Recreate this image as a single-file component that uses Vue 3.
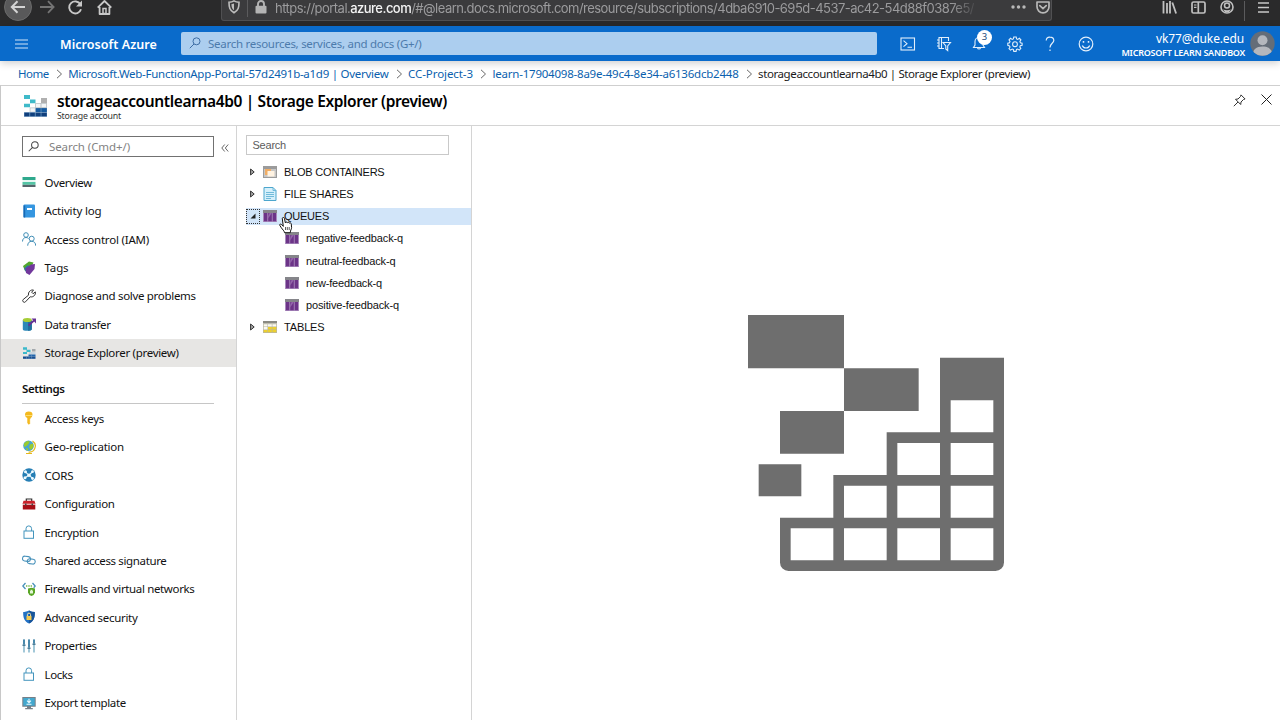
<script setup>
// Spreads a label's letters so that it fills the given width in pixels.
const vFit = {
  mounted(el, binding) {
    const range = document.createRange()
    range.selectNodeContents(el)
    const natural = range.getBoundingClientRect().width
    const count = el.textContent.trim().length
    el.style.letterSpacing = ((binding.value - natural) / count).toFixed(3) + 'px'
  },
}

const crumbs = [
  { text: 'Home', w: 30.7 },
  { text: 'Microsoft.Web-FunctionApp-Portal-57d2491b-a1d9 | Overview', w: 320.3 },
  { text: 'CC-Project-3', w: 65 },
  { text: 'learn-17904098-8a9e-49c4-8e34-a6136dcb2448', w: 246 },
]

const general = [
  { text: 'Overview', w: 47.5, icon: 'overview' },
  { text: 'Activity log', w: 57, icon: 'log' },
  { text: 'Access control (IAM)', w: 104.5, icon: 'people' },
  { text: 'Tags', w: 24, icon: 'tags' },
  { text: 'Diagnose and solve problems', w: 151.2, icon: 'wrench' },
  { text: 'Data transfer', w: 66, icon: 'transfer' },
  { text: 'Storage Explorer (preview)', w: 134.2, icon: 'explorer', active: true },
]

const settings = [
  { text: 'Access keys', w: 59.5, icon: 'key' },
  { text: 'Geo-replication', w: 79.5, icon: 'globe' },
  { text: 'CORS', w: 29, icon: 'cors' },
  { text: 'Configuration', w: 70, icon: 'toolbox' },
  { text: 'Encryption', w: 54.2, icon: 'lock' },
  { text: 'Shared access signature', w: 122, icon: 'link' },
  { text: 'Firewalls and virtual networks', w: 150, icon: 'firewall' },
  { text: 'Advanced security', w: 93, icon: 'shield' },
  { text: 'Properties', w: 52.2, icon: 'sliders' },
  { text: 'Locks', w: 28.2, icon: 'lock' },
  { text: 'Export template', w: 81.3, icon: 'monitor' },
]

const groups = [
  { items: general },
  { title: 'Settings', items: settings },
]

const tree = [
  { text: 'BLOB CONTAINERS', w: 100.5, icon: 'blob' },
  { text: 'FILE SHARES', w: 69.5, icon: 'file' },
  { text: 'QUEUES', w: 45, icon: 'queue', open: true },
  { text: 'negative-feedback-q', w: 97, icon: 'queue', child: true },
  { text: 'neutral-feedback-q', w: 89.5, icon: 'queue', child: true },
  { text: 'new-feedback-q', w: 76, icon: 'queue', child: true },
  { text: 'positive-feedback-q', w: 93, icon: 'queue', child: true },
  { text: 'TABLES', w: 40.5, icon: 'table' },
]
</script>

<template>
  <div class="page">
    <div class="browser">
      <div class="nav">
        <span class="back">
          <svg width="16" height="14" viewBox="0 0 16 14" fill="none" stroke="#d4d4d4" stroke-width="2"><path d="M15 7H2M7.5 1.2L1.8 7l5.7 5.8" /></svg>
        </span>
        <svg class="fwd" width="15" height="14" viewBox="0 0 15 14" fill="none" stroke="#747474" stroke-width="1.8"><path d="M0 7h13M8 1.2L13.6 7 8 12.8" /></svg>
        <svg class="reload" width="15" height="15" viewBox="0 0 15 15"><path d="M12.4 4.3A6 6 0 1 0 13 9.2" fill="none" stroke="#c8c8c8" stroke-width="1.9" /><path d="M14 .6v6H8z" fill="#c8c8c8" /></svg>
        <svg class="home" width="15" height="15" viewBox="0 0 15 15" fill="none" stroke="#c8c8c8" stroke-width="1.8"><path d="M.7 7.6L7.5 1l6.800 6.600M2.600 7v7h9.800V7" stroke-linejoin="round" /><path d="M6 13.500V8.600h3v4.900z" stroke-width="1.500" /></svg>
      </div>
      <div class="url">
        <svg class="shieldo" width="12" height="14" viewBox="0 0 12 14"><path d="M6 .9c1.7 1 3.3 1.3 5 1.4 0 5-.6 8-5 10.5C1.600 10.300 1 7.300 1 2.300 2.700 2.200 4.300 1.900 6 .9z" fill="none" stroke="#bdbdbd" stroke-width="1.6" /><path d="M6 3.500v6.800C4.200 9 3.500 7.500 3.400 4.300z" fill="#bdbdbd" /></svg>
        <i class="bar"></i>
        <svg class="padlock" width="12" height="14" viewBox="0 0 12 14"><path d="M3 6V4a3 3 0 0 1 6 0v2" fill="none" stroke="#b4b4b4" stroke-width="1.900" /><rect x=".5" y="5.800" width="11" height="7.700" rx="1" fill="#b4b4b4" /></svg>
        <div class="address"><span v-fit="699">https://portal.<b>azure.com</b>/#@learn.docs.microsoft.com/resource/subscriptions/4dba6910-695d-4537-ac42-54d88f0387e5/</span></div>
        <svg class="dots" width="15" height="4" viewBox="0 0 15 4" fill="#b8b8b8"><circle cx="2" cy="2" r="1.700" /><circle cx="7.500" cy="2" r="1.700" /><circle cx="13" cy="2" r="1.700" /></svg>
        <svg class="pocket" width="14" height="13" viewBox="0 0 14 13" fill="none" stroke="#b8b8b8" stroke-width="1.700"><path d="M1 1h12v4.800a6 6 0 0 1-12 0z" stroke-linejoin="round" /><path d="M3.800 4.600L7 7.600l3.200-3" stroke-linecap="round" /></svg>
      </div>
      <div class="tools">
        <svg width="15" height="13" viewBox="0 0 15 13" stroke="#c0c0c0" stroke-width="1.800"><path d="M1.500 0v12.500M5 2v10.500M8 0v12.500M10.300 1.500l3.800 11" /></svg>
        <svg width="15" height="13" viewBox="0 0 15 13" fill="none" stroke="#c0c0c0" stroke-width="1.700"><rect x="1" y="1" width="13" height="11" rx="1.500" /><path d="M7.300 1v11" /><path d="M3 4h2.500M3 6.300h2.500" stroke-width="1.200" /></svg>
        <svg width="14" height="14" viewBox="0 0 14 14"><circle cx="7" cy="7" r="6" fill="none" stroke="#c0c0c0" stroke-width="1.600" /><circle cx="7" cy="5.500" r="2.500" fill="none" stroke="#c0c0c0" stroke-width="1.500" /><path d="M3 9.500q4 1.500 8 0Q9.500 12.300 7 12.300T3 9.500z" fill="#c0c0c0" /></svg>
        <i class="bar"></i>
        <svg width="11" height="11" viewBox="0 0 11 11" stroke="#c8c8c8" stroke-width="1.700"><path d="M0 1h11M0 5.500h11M0 10h11" /></svg>
      </div>
    </div>

    <header class="azure">
      <svg class="burger" width="13" height="10" viewBox="0 0 13 10" stroke="#cfe3f7" stroke-width="1.100"><path d="M0 1h13M0 5h13M0 9h13" /></svg>
      <div class="brand"><span v-fit="97">Microsoft Azure</span></div>
      <div class="search">
        <svg width="12" height="12" viewBox="0 0 12 12" fill="none" stroke="#3c6ca3" stroke-width="1"><circle cx="7.500" cy="4.300" r="3.500" /><path d="M5 7L.8 11.200" /></svg>
        <span v-fit="213.500">Search resources, services, and docs (G+/)</span>
      </div>
      <div class="actions">
        <svg width="16" height="14" viewBox="0 0 16 14" fill="none" stroke="#e3effb" stroke-width="1.100"><rect x="1" y="1" width="13.500" height="12" /><path d="M3.500 3.700L7 6.700l-3.500 3M7.500 10.300H12" /></svg>
        <svg width="16" height="16" viewBox="0 0 16 16" fill="none" stroke="#e3effb" stroke-width="1.100"><path d="M12.500 5V1.500H3v11h5M5.500 1.500v11M1 4h2M1 7h2M1 10h2" /><path d="M7 6.500h7.500l-2.800 3.500v4.500L9.800 13v-3z" /></svg>
        <span class="bell">
          <svg width="14" height="15" viewBox="0 0 14 15" fill="none" stroke="#e3effb" stroke-width="1.100"><path d="M1.500 11.500h11L11 9V5.500a4 4 0 0 0-8 0V9zM5.500 12a1.600 1.600 0 0 0 3 0" /></svg>
          <em>3</em>
        </span>
        <svg width="16" height="16" viewBox="0 0 16 16" fill="none" stroke="#e3effb" stroke-width="1.100"><path d="M6.800 1h2.400l.4 1.900 1.100.5 1.700-1.100 1.500 1.600-1 1.700.5 1.100 1.700.4v2.200l-1.800.5-.5 1.100 1 1.600-1.500 1.600-1.700-1-1.100.4-.4 1.900H6.800l-.5-1.900-1.100-.4-1.700 1L2 12.600 3 11l-.5-1.100L.800 9.400V7.100l1.700-.4L3 5.600 2 3.900l1.500-1.600 1.700 1.100 1.100-.5z" /><circle cx="8" cy="8.200" r="2.400" /></svg>
        <svg width="10" height="16" viewBox="0 0 10 16" fill="none" stroke="#e3effb" stroke-width="1.200"><path d="M1.200 4.500A3.600 3.600 0 0 1 5 1.200c2.300 0 3.800 1.300 3.800 3.200C8.800 7.200 5 7.500 5 11.500M5 13.600v1.500" /></svg>
        <svg width="16" height="16" viewBox="0 0 16 16" fill="none" stroke="#e3effb" stroke-width="1.200"><circle cx="8" cy="8" r="6.800" /><path d="M4.300 9.500a4 4 0 0 0 7.400 0" /><path d="M5.500 5v1.700M10.500 5v1.700" stroke-width="1.500" /></svg>
      </div>
      <div class="account">
        <span class="mail" v-fit="88">vk77@duke.edu</span>
        <span class="tenant" v-fit="123.500">MICROSOFT LEARN SANDBOX</span>
      </div>
      <svg class="avatar" width="25" height="25" viewBox="0 0 25 25"><defs><clipPath id="face"><circle cx="12.500" cy="12.500" r="12.200" /></clipPath></defs><g clip-path="url(#face)"><rect width="25" height="25" fill="#646d78" /><circle cx="12.500" cy="9.300" r="5" fill="#b4b7bd" /><path d="M2.500 25c0-7 4-9.600 10-9.600s10 2.600 10 9.600z" fill="#b4b7bd" /></g></svg>
    </header>

    <nav class="crumbs">
      <template v-for="c in crumbs" :key="c.text">
        <a v-fit="c.w">{{ c.text }}</a>
        <svg width="19.500" height="10" viewBox="0 0 19.500 10" fill="none" stroke="#666" stroke-width="1"><path d="M8 .800L12.500 5 8 9.200" /></svg>
      </template>
      <span v-fit="272">storageaccountlearna4b0 | Storage Explorer (preview)</span>
    </nav>

    <section class="blade">
      <div class="head">
        <svg class="logo" width="23" height="22" viewBox="0 0 23 22">
          <path fill="#3fbac9" d="M0 0h6v4H0zM6 4.500h5.500v3.700H6zM0 8.700h6v3.600H0z" />
          <path fill="#b0b0b0" d="M17 3h6v5h-6z" />
          <path fill="#b9c0c5" d="M11.200 8h11.800v5H11.200zM5.700 12.600h5.500v4.600H5.700z" />
          <path fill="#f2f5f7" d="M12 8.800h4.500v3.500H12zM17.500 8.800h4.700v3.500h-4.700zM6.400 13.300h4.500v3.400H6.400z" />
          <path fill="#5a88b5" d="M11.500 13H23v4H11.500zM0 17.200h23v4.500H0z" />
          <path fill="#155aa0" d="M11.800 13.200h4.800v3.700h-4.800zM17.500 13.200h5.200v3.700h-5.200z" />
          <path fill="#103f7c" d="M.5 17.700h4.700v3.600H.5zM6.200 17.700h4.600v3.600H6.200zM11.800 17.700h4.800v3.600h-4.800zM17.500 17.700h5.200v3.600h-5.200z" />
        </svg>
        <div class="titles">
          <h1><span v-fit="390">storageaccountlearna4b0 | Storage Explorer (preview)</span></h1>
          <p><span v-fit="64">Storage account</span></p>
        </div>
        <svg class="pin" width="13" height="13" viewBox="0 0 13 13" fill="none" stroke="#333" stroke-width="1"><path d="M8 .900L12.100 5l-1.600.5L8 8l-.3 2.500L2.500 5.300 5 5l2.500-2.500zM5 8L.800 12.200" /></svg>
        <svg class="close" width="11" height="11" viewBox="0 0 11 11" stroke="#222" stroke-width="1"><path d="M.5.5l10 10M10.500.5l-10 10" /></svg>
      </div>

      <div class="body">
        <aside class="menu">
          <div class="filter">
            <div class="field">
              <svg width="11" height="11" viewBox="0 0 12 12" fill="none" stroke="#444" stroke-width="1.100"><circle cx="7.500" cy="4.300" r="3.600" /><path d="M5 7L.8 11.200" /></svg>
              <span v-fit="81">Search (Cmd+/)</span>
            </div>
            <svg class="collapse" width="8" height="8" viewBox="0 0 8 8" fill="none" stroke="#666" stroke-width="1"><path d="M3.700.500L.8 4l2.900 3.500M7.200.500L4.300 4l2.900 3.500" /></svg>
          </div>

          <div v-for="g in groups" :key="g.title || 'general'" class="group">
            <h2 v-if="g.title"><span v-fit="42.500">{{ g.title }}</span></h2>
            <div v-for="m in g.items" :key="m.text" class="item" :class="{ active: m.active }">
              <svg class="mi" width="14" height="14" viewBox="0 0 14 14">
                <g v-if="m.icon === 'overview'"><path fill="#2fa98d" d="M.500 2h13v3h-13z" /><path fill="#e8f7f3" d="M.500 5h13v2h-13z" /><path fill="#54c5a5" d="M.500 7h13v2.800h-13z" /><path fill="#56656a" d="M.500 9.800h13V12h-13z" /></g>
                <g v-else-if="m.icon === 'log'"><rect x="1.500" y=".500" width="11.500" height="13" rx="1" fill="#3596e0" /><path fill="#1869b4" d="M1.500 1.500h1.700v12H2q-.5 0-.5-.5z" /><path fill="#fff" d="M5 4h5v2H5z" /></g>
                <g v-else-if="m.icon === 'people'" fill="none" stroke="#3f8db5" stroke-width="1"><circle cx="4" cy="3" r="2.300" /><path d="M.500 9.500c0-2.500 1.500-4 3.500-4 1 0 1.800.3 2.500 1" /><circle cx="9.700" cy="6.700" r="2.500" /><path d="M5.700 13.700c0-2.800 1.600-4.400 4-4.400s4 1.600 4 4.400" /></g>
                <g v-else-if="m.icon === 'tags'"><path fill="#53a82e" d="M1 5l6-4.500 4.500 1L9 7 3 10z" /><path fill="#2e74ac" d="M2 7.500L6 4l3 5-5 2z" /><path fill="#71389c" d="M3.500 7.500l5.500-4 4-.5-.5 5L7.500 14 4 12z" /></g>
                <g v-else-if="m.icon === 'wrench'" fill="none" stroke="#333" stroke-width="1"><path d="M1.200 10.500L6.500 6.200C6 3 8.500.500 11.500 1L9.700 3.200l1.400 1.500 2.200-1.800C14 6 11.200 8.500 8.200 7.800L3.500 12.800a1.600 1.600 0 0 1-2.300-2.300z" /></g>
                <g v-else-if="m.icon === 'transfer'"><path fill="#2b88b8" d="M.800 3h9v9.200a4.500 1.600 0 0 1-9 0z" /><path fill="#1f6f9c" d="M6 4h3.800v8.500Q8.500 13.700 6 13.800z" /><ellipse cx="5.300" cy="3" rx="4.500" ry="2" fill="#a5cc36" /><path d="M6.500 8.500L12 3.500" stroke="#673194" stroke-width="1.700" /><path fill="#673194" d="M9.500 1.500H14v5z" /></g>
                <g v-else-if="m.icon === 'explorer'"><path fill="#3cb9ca" d="M1 1.200h4v2.500H1zM4.500 3.700h4v2.200h-4zM1 5.900h4V8H1z" /><path fill="#a3a8ac" d="M10 3h3.500v2.500H10z" /><path fill="#c8d6df" d="M7 6h6.500v2.500H7z" /><path fill="#1f65ad" d="M6.500 8.500h7V10.500h-7z" /><path fill="#164e91" d="M1 10.500h12.500v2.300H1z" /><path stroke="#7aa3cc" stroke-width=".5" d="M4.500 10.500v2.300M9.600 8.500v4.300M7 10.500v2.300" /></g>
                <g v-else-if="m.icon === 'key'"><path fill="#f4b91f" d="M3 3.500Q3 .500 6.800.500t3.700 3Q10.500 6 8.500 7v1l-1 1 1 1-1 1 1 1-1.700 1.700L5.300 12V7Q3 6 3 3.500z" /><path fill="#fbdc70" d="M3.500 4h6.500v1H3.500z" /></g>
                <g v-else-if="m.icon === 'globe'"><path d="M10.500 1a6 6 0 0 1-4 11M4 13.500h6" fill="none" stroke="#e4b81c" stroke-width="1.200" /><circle cx="6.500" cy="5.800" r="5.300" fill="#48a6d0" /><path fill="#9acb2e" d="M2 3.500L5 1l3 .500L6.500 4 4.500 6 2 7zM8 4.500l3-1 .5 3.500-2.500 3L7 7.500zM4 8l2 .5v2.200L4.500 10z" /></g>
                <g v-else-if="m.icon === 'cors'"><circle cx="7" cy="7" r="6.700" fill="#267fb5" /><path d="M3 3.700l4 3.500 3.700-3.700M3 9.700l4-2.500 3.700 3.300" fill="none" stroke="#dff3fc" stroke-width="1.100" /><g fill="#eefaff"><circle cx="7" cy="7.200" r="1.700" /><circle cx="3.500" cy="3.700" r="1.500" /><circle cx="10.500" cy="3.700" r="1.400" /><circle cx="3" cy="9.700" r="1.500" /><circle cx="10.500" cy="10.500" r="1.400" /></g></g>
                <g v-else-if="m.icon === 'toolbox'"><path d="M4.300 4V2h5.400v2" fill="none" stroke="#333" stroke-width="1.200" /><path fill="#cb2129" d="M1.500 3.800h11L13.500 7H.500z" /><path fill="#a80e16" d="M.800 7.500h12.500v5H.800z" /><path fill="#f5dada" d="M.500 6.700h13v.700H.500z" /><path fill="#444" d="M3 6.500h1.500v2H3zM9.500 6.500H11v2H9.500z" /></g>
                <g v-else-if="m.icon === 'lock'" fill="none" stroke="#4495bd" stroke-width="1"><rect x="2" y="6" width="9.500" height="7.300" /><path d="M4 6V3.700a2.800 2.800 0 0 1 5.600 0V6" /></g>
                <g v-else-if="m.icon === 'link'" fill="none" stroke="#4791ba" stroke-width="1.100"><rect x=".600" y="3.300" width="8" height="4.800" rx="2.400" transform="rotate(8 4 5)" /><rect x="5.300" y="6" width="8" height="4.800" rx="2.400" transform="rotate(8 9 8)" /></g>
                <g v-else-if="m.icon === 'firewall'"><path d="M3.500 1L.800 4l2.700 3M10.500 1l2.700 3-1.500 1.700" fill="none" stroke="#4791ba" stroke-width="1.300" /><g fill="#59a626"><circle cx="4.700" cy="4" r=".800" /><circle cx="7" cy="4" r=".800" /><circle cx="9.300" cy="4" r=".800" /><path d="M6 6.500l3.500-.700 3.500.700v4q-.5 2.300-3.500 3.500Q6.500 12.800 6 10.500z" /></g><path fill="#e4f5d7" d="M8 9h3v2.500H8zM8.500 7.700h2V9h-2z" /></g>
                <g v-else-if="m.icon === 'shield'"><path fill="#2271c4" d="M7 .500q3 1.500 5.800 1.500C13 8 11.500 11.300 7 13.600 2.500 11.300 1 8 1.200 2 4 2 7 .500 7 .500z" /><path fill="#195599" d="M7 .500q3 1.500 5.800 1.500C13 8 11.500 11.300 7 13.600z" /><path fill="#f4ca4e" d="M4.500 6h5v4h-5z" /><path d="M5.400 6V4.700a1.600 1.600 0 0 1 3.200 0V6" fill="none" stroke="#f0e0a6" stroke-width="1" /></g>
                <g v-else-if="m.icon === 'sliders'"><path stroke="#93bfd2" stroke-width="1.700" d="M2 .500v13M7 .500v13M12 .500v13" /><path stroke="#3b7fa4" stroke-width="1.700" d="M2 .500v5M7 .500v8M12 .500v4" /><path fill="#4c7d98" d="M.500 5.500h3V7h-3zM5.500 8.500h3V10h-3zM10.500 4.500h3V6h-3z" /></g>
                <g v-else-if="m.icon === 'monitor'"><path fill="#777f87" d="M.300 1h13.400v9.700H.300zM5 10.700h4V12h1.800v1.300H3.200V12H5z" /><path fill="#43a8ce" d="M1.300 2h11.400v7.700H1.300z" /><path d="M7 2.800v3.700M5 4.700l2 2 2-2M4.500 8.300h5" fill="none" stroke="#eefaff" stroke-width="1.100" /></g>
              </svg>
              <span v-fit="m.w">{{ m.text }}</span>
            </div>
          </div>
        </aside>

        <div class="tree">
          <div class="tsearch"><span v-fit="33.500">Search</span></div>
          <div v-for="t in tree" :key="t.text" class="node" :class="{ child: t.child, open: t.open }">
            <span class="twist">
              <svg v-if="t.open" width="6" height="6" viewBox="0 0 6 6"><path d="M5.500.500v5h-5z" fill="#222" /></svg>
              <svg v-else-if="!t.child" width="5" height="8" viewBox="0 0 5 8"><path d="M.600 1v6L4.200 4z" fill="#aaa" stroke="#333" stroke-width="1" /></svg>
            </span>
            <svg class="ti" width="14" height="14" viewBox="0 0 14 14">
              <g v-if="t.icon === 'blob'"><path fill="#9b9b9b" d="M0 1h14v12H0z" /><path fill="#c7c7c7" d="M1 4h12v8H1z" /><path fill="#f0ad65" d="M2 4h6v6H2z" /><path fill="#fff3e2" d="M4.500 6h7v5.500h-7z" /></g>
              <g v-else-if="t.icon === 'file'"><path d="M1 .500h9L13 3.500v10H1z" fill="#d5f0fb" stroke="#4da6cd" stroke-width="1" /><path d="M10 .500v3h3M3 5.500h8M3 7.500h8M3 9.500h8M3 11.500h5" fill="none" stroke="#65b4d6" stroke-width=".900" /></g>
              <g v-else-if="t.icon === 'queue'"><path fill="#85858a" d="M0 1h14v3H0z" /><path fill="#a98abc" d="M0 4h14v9H0z" /><path fill="#6c3488" d="M1 4h3.300v8.200H1zM5.200 4h3.600v8.200H5.200zM9.700 4H13v8.200H9.700z" /><path fill="#9365aa" d="M6.500 4h2.300L5.200 9.500V7z" /></g>
              <g v-else><path fill="#8b8b83" d="M0 1h14v2.500H0z" /><path fill="#b9b6a0" d="M0 3.500h14V13H0z" /><path fill="#fbfaf2" d="M.700 4.200h3.800v2.300H.700zM5 4.200h3.800v2.300H5zM9.400 4.200h3.900v2.300H9.400zM.700 7h3.800v2.400H.700z" /><path fill="#ecd02f" d="M5 7h3.800v2.400H5zM9.400 7h3.900v2.400H9.400zM.700 9.900h3.800v2.400H.700zM5 9.900h3.800v2.400H5zM9.400 9.900h3.900v2.400H9.400z" /></g>
            </svg>
            <span v-fit="t.w">{{ t.text }}</span>
            <svg v-if="t.open" class="hand" width="14" height="17" viewBox="0 0 14 17"><path d="M3.300 1.600c0-1.500 2-1.500 2.200 0l.8 4.200c.3-1.100 1.900-1 2 .1.500-.9 1.800-.7 2 .3.700-.7 2-.3 2 .9l.3 3.600c0 1.500-1.300 2.600-1.300 5H5.500c-.2-2-2-3-3.200-5L.8 8.400c-.5-1.300 1-1.800 1.800-.8l1.700 1.800z" fill="#fff" stroke="#111" stroke-width="1" /><path d="M6.500 10v3M8.300 10v3M10.200 10v3" stroke="#333" stroke-width=".800" /></svg>
          </div>
        </div>

        <main class="canvas">
          <svg width="256" height="256" viewBox="0 0 24 24" fill="#6e6e6e">
            <path d="M0 0h9v5H0zM9 5h7v4H9zM3 9h6v4H3zM1 14h4v3H1z" />
            <path fill-rule="evenodd" d="M18 4h6v19.200a.8.800 0 0 1-.8.800H3.800a.8.800 0 0 1-.8-.8V19h5v-4h5v-4h5zM19 8v3h4V8zM14 12v3h4v-3zM19 12v3h4v-3zM9 16v3h4v-3zM14 16v3h4v-3zM19 16v3h4v-3zM4 20v3h4v-3zM9 20v3h4v-3zM14 20v3h4v-3zM19 20v3h4v-3z" />
          </svg>
        </main>
      </div>
    </section>
  </div>
</template>

<style>
html, body { margin: 0; overflow: hidden; background: #fff; }
</style>

<style scoped>
.page { width: 1280px; height: 720px; overflow: hidden; display: flex; flex-direction: column; background: #fff; color: #111; font-family: "Noto Sans", "Open Sans", sans-serif; font-size: 11.500px; white-space: nowrap; }
.page * { box-sizing: border-box; }
svg { flex: none; display: block; }

.browser { height: 26px; flex: none; display: flex; background: #2a2a2b; overflow: hidden; }
.nav { width: 221px; flex: none; display: flex; align-items: flex-start; }
.back { width: 28px; height: 28px; flex: none; margin: -7px 0 0 4px; border-radius: 50%; background: #59595a; border: 1px solid #6b6b6b; display: flex; align-items: center; justify-content: center; }
.fwd { margin: 0 0 0 8px; }
.reload { margin-left: 13px; }
.home { margin-left: 14px; }
.url { width: 831px; height: 21px; flex: none; display: flex; align-items: flex-start; background: #3b3b3d; border: 1px solid #505052; border-top: 0; border-radius: 0 0 3px 3px; padding-left: 6px; }
.bar { width: 1px; height: 17px; background: #5b5b5d; }
.shieldo { margin-right: 7px; }
.padlock { margin: 0 8px 0 7px; }
.address { width: 704px; height: 17px; line-height: 16px; overflow: hidden; font-family: Inter, "Liberation Sans", sans-serif; font-size: 13px; color: #9b9b9d; -webkit-mask-image: linear-gradient(90deg, #000 96%, transparent 100%); mask-image: linear-gradient(90deg, #000 96%, transparent 100%); }
.address b { font-weight: 500; color: #f4f4f4; }
.dots { margin: 5px 0 0 32px; }
.pocket { margin: 1px 0 0 10px; }
.tools { flex: 1; display: flex; align-items: flex-start; padding: 1px 0 0 110px; }
.tools svg:nth-of-type(2) { margin-left: 14px; }
.tools svg:nth-of-type(3) { margin: -1px 0 0 14px; }
.tools .bar { margin: 0 13px 0 10px; height: 20px; }
.tools svg:last-child { margin-top: 1px; }

.azure { height: 35px; flex: none; display: flex; align-items: center; background: #0a6bcb; position: relative; z-index: 1; box-shadow: 0 2px 8px rgba(0, 0, 0, .2); }
.burger { margin-left: 15px; }
.brand { width: 121px; margin-left: 32px; font-weight: 600; font-size: 12.500px; color: #fff; line-height: 18px; padding-top: 2px; }
.search { width: 696px; height: 23px; margin-top: -1px; display: flex; align-items: center; gap: 7px; padding-left: 8px; background: #acceef; border-radius: 2px; color: #4c7bac; font-size: 11.500px; }
.actions { display: flex; align-items: center; width: 223px; padding-left: 23px; gap: 19.500px; }
.actions > svg:nth-child(5) { margin: 0 3px; }
.bell { position: relative; width: 16px; padding-left: 1px; }
.bell em { position: absolute; left: 6px; top: -6px; width: 15px; height: 15px; border-radius: 50%; background: #fff; color: #1b4c7c; font-style: normal; font-size: 9.500px; line-height: 14px; text-align: center; }
.account { width: 145px; display: flex; flex-direction: column; align-items: flex-end; color: #fff; padding-top: 2px; }
.mail { font-size: 12px; line-height: 15px; margin-right: 1px; }
.tenant { font-size: 9px; line-height: 13px; font-weight: 600; }
.avatar { margin-left: 5px; }

.crumbs { height: 24px; flex: none; display: flex; align-items: center; padding: 1px 0 0 18px; background: #fff; font-size: 11.500px; line-height: 15px; color: #1b1b1b; }
.crumbs a { color: #0b5fae; }

.blade { flex: 1; min-height: 0; border-top: 1px solid #cfcfcf; border-left: 1px solid #c8c8c8; display: flex; flex-direction: column; }
.head { height: 40px; flex: none; border-bottom: 1px solid #d4d4d4; display: flex; align-items: flex-start; }
.logo { margin: 9px 10px 0 23px; }
.titles { width: 1176px; }
h1 { margin: 5px 0 0; font-size: 15.500px; line-height: 21px; font-weight: 600; color: #000; }
p { margin: -2px 0 0; font-size: 8.800px; line-height: 12px; color: #333; }
.pin { margin-top: 8px; }
.close { margin: 8px 0 0 15px; }

.body { flex: 1; min-height: 0; display: flex; }
.menu { width: 236px; flex: none; border-right: 1px solid #d4d4d4; }
.filter { display: flex; align-items: center; padding: 10px 0 0 21px; height: 31px; margin-bottom: 11px; }
.field { width: 192px; height: 21px; border: 1px solid #717171; display: flex; align-items: center; gap: 10px; padding-left: 5px; color: #838383; }
.collapse { margin: 2px 0 0 7px; }
h2 { width: 192px; height: 36px; margin: 1px 0 0 21px; padding-top: 11px; border-bottom: 1px solid #c6c6c6; font-size: 11.500px; line-height: 20px; font-weight: 600; }
.item { height: 28.450px; display: flex; align-items: center; gap: 9px; padding-left: 20.500px; color: #111; }
.item.active { background: #e7e6e4; }

.tree { width: 235px; flex: none; border-right: 1px solid #d4d4d4; padding: 9px 0 0 9px; font-family: "Liberation Sans", Arial, sans-serif; font-size: 11px; color: #111; }
.tsearch { width: 203px; height: 20px; border: 1px solid #c9c9c9; line-height: 19px; padding-left: 5.500px; color: #5c5c5c; margin-bottom: 5.700px; }
.node { position: relative; height: 22.200px; display: flex; align-items: center; }
.node.open { background: linear-gradient(#d2e5f9, #d2e5f9) 0 3px / 100% 17px no-repeat; }
.twist { width: 14px; height: 15px; margin-right: 3px; display: flex; align-items: center; padding-left: 4px; }
.open .twist { border: 1px dotted #333; padding-left: 3px; }
.ti { margin-right: 7px; }
.child .ti { margin-left: 22px; }
.hand { position: absolute; left: 33px; top: 12px; z-index: 1; }

.canvas { flex: 1; display: flex; justify-content: center; align-items: flex-start; padding-top: 189px; }
</style>
